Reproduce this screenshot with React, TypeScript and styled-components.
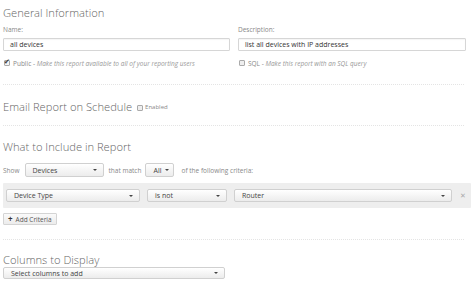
import React, { FC } from "react"
import styled, { createGlobalStyle } from "styled-components"

const GlobalStyle = createGlobalStyle`
  html, body {
    margin: 0;
    padding: 0;
    background: #fff;
  }
  body {
    font-family: "Open Sans", "Liberation Sans", Arial, sans-serif;
    color: #555;
  }
`

const Page = styled.div`
  width: 474px;
  height: 287px;
  overflow: hidden;
  box-sizing: border-box;
  padding: 0 4px 0 3px;
`

const Section = styled.section<{ $top: number; $bottom: number }>`
  padding-top: ${p => p.$top}px;
  padding-bottom: ${p => p.$bottom}px;
`

const Divider = styled.hr`
  margin: 0 6px 0 0;
  border: 0;
  border-top: 1px dotted #e4e4e4;
  height: 0;
`

const Heading = styled.h2`
  margin: 0;
  font-family: "Open Sans Light", "Open Sans", sans-serif;
  font-size: 11.2px;
  line-height: 15px;
  font-weight: 300;
  color: #666;
  display: flex;
  align-items: center;
  gap: 4px;
`

const Columns = styled.div`
  display: grid;
  grid-template-columns: 227px 228px;
  column-gap: 8px;
  margin-top: 6px;
`

const Field = styled.div`
  display: flex;
  flex-direction: column;
`

const Label = styled.label`
  font-size: 6.5px;
  line-height: 8px;
  color: #888;
`

const TextInput = styled.div`
  margin-top: 4px;
  height: 13px;
  box-sizing: border-box;
  border: 1px solid #d6d6d6;
  border-radius: 1px;
  padding: 0 6px;
  font-size: 7px;
  line-height: 11px;
  color: #333;
  box-shadow: inset 0 1px 1px rgba(0, 0, 0, 0.04);
`

const CheckRow = styled.div`
  margin-top: 7px;
  height: 10px;
  display: flex;
  align-items: center;
  gap: 3px;
  font-size: 6.5px;
  color: #888;
  white-space: nowrap;
`

const Hint = styled.em`
  font-style: italic;
  color: #999;
`

const Box = styled.span<{ $checked?: boolean }>`
  width: 6px;
  height: 6px;
  box-sizing: border-box;
  border: 1px solid #aaa;
  border-radius: 1px;
  background: ${p => (p.$checked ? "#f4f4f4" : "#eee")};
  position: relative;
  flex: none;
  margin-left: 1px;

  &::after {
    content: ${p => (p.$checked ? "'✔'" : "none")};
    position: absolute;
    left: -1px;
    top: -4px;
    font-size: 7px;
    line-height: 9px;
    color: #333;
  }
`

const Enabled = styled.span`
  display: inline-flex;
  align-items: center;
  gap: 2px;
  font-family: "Open Sans", sans-serif;
  font-size: 6px;
  color: #888;
  font-weight: 400;
  margin-top: 2px;
`

const ShowRow = styled.div`
  margin-top: 9px;
  display: flex;
  align-items: center;
  font-size: 6.5px;
  color: #888;
  height: 14px;
`

const Select = styled.div<{ $width?: number; $grow?: boolean; $h?: number }>`
  height: ${p => p.$h ?? 14}px;
  width: ${p => (p.$width ? `${p.$width}px` : "auto")};
  flex: ${p => (p.$grow ? "1" : "none")};
  box-sizing: border-box;
  border: 1px solid #d0d0d0;
  border-radius: 2px;
  background: linear-gradient(#ffffff, #ececec);
  display: flex;
  align-items: center;
  justify-content: space-between;
  gap: 4px;
  padding: 0 6px 0 7px;
  font-size: 7px;
  color: #444;
`

const Caret = styled.span`
  width: 0;
  height: 0;
  border-left: 2px solid transparent;
  border-right: 2px solid transparent;
  border-top: 2.5px solid #444;
`

const Gap = styled.span<{ $w: number }>`
  width: ${p => p.$w}px;
  flex: none;
`

const CriteriaPanel = styled.div`
  margin-top: 6px;
  margin-right: -1px;
  height: 25px;
  box-sizing: border-box;
  background: #eeeeee;
  border-radius: 1px;
  padding: 0 4px 0 3px;
  display: flex;
  align-items: center;
  gap: 7px;
`

const Remove = styled.span`
  font-size: 7px;
  color: #aaa;
  width: 9px;
  text-align: center;
  margin-left: -1px;
`

const AddButton = styled.div`
  margin-top: 5px;
  width: 54px;
  height: 12px;
  box-sizing: border-box;
  border: 1px solid #d4d4d4;
  border-radius: 1px;
  background: linear-gradient(#fafafa, #ececec);
  display: flex;
  align-items: center;
  gap: 3px;
  padding-left: 4px;
  font-size: 6.5px;
  color: #555;

  b {
    font-size: 8px;
    line-height: 8px;
    color: #333;
  }
`

const App: FC = () => (
  <Page>
    <GlobalStyle />
    <Section $top={5} $bottom={16}>
      <Heading>General Information</Heading>
      <Columns>
        <Field>
          <Label>Name:</Label>
          <TextInput>all devices</TextInput>
          <CheckRow>
            <Box $checked />
            <span>
              Public - <Hint>Make this report available to all of your reporting users</Hint>
            </span>
          </CheckRow>
        </Field>
        <Field>
          <Label>Description:</Label>
          <TextInput>list all devices with IP addresses</TextInput>
          <CheckRow>
            <Box />
            <span>
              SQL - <Hint>Make this report with an SQL query</Hint>
            </span>
          </CheckRow>
        </Field>
      </Columns>
    </Section>
    <Divider />
    <Section $top={13} $bottom={10}>
      <Heading>
        Email Report on Schedule
        <Enabled>
          <Box />
          Enabled
        </Enabled>
      </Heading>
    </Section>
    <Divider />
    <Section $top={13} $bottom={14}>
      <Heading>What to Include in Report</Heading>
      <ShowRow>
        Show
        <Gap $w={5} />
        <Select $width={79}>
          Devices
          <Caret />
        </Select>
        <Gap $w={5} />
        that match
        <Gap $w={4} />
        <Select $width={29}>
          All
          <Caret />
        </Select>
        <Gap $w={7} />
        of the following criteria:
      </ShowRow>
      <CriteriaPanel>
        <Select $width={134} $h={13}>
          Device Type
          <Caret />
        </Select>
        <Select $width={80} $h={13}>
          is not
          <Caret />
        </Select>
        <Select $grow $h={13}>
          Router
          <Caret />
        </Select>
        <Remove>✕</Remove>
      </CriteriaPanel>
      <AddButton>
        <b>+</b>
        Add Criteria
      </AddButton>
    </Section>
    <Divider />
    <Section $top={12} $bottom={0}>
      <Heading>Columns to Display</Heading>
      <Select $width={222} $h={12}>
        Select columns to add
        <Caret />
      </Select>
    </Section>
  </Page>
)

export default App
